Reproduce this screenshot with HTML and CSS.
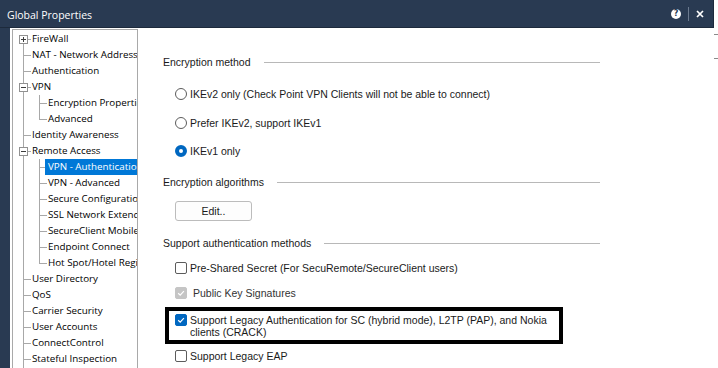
FILE: index.html
```html
<!DOCTYPE html>
<html>
<head>
<meta charset="utf-8">
<link rel="stylesheet" href="styles.css">
</head>
<body>
<div class="screen">
  <div class="window">
    <div class="titlebar">
      <span class="title">Global Properties</span>
      <div class="controls">
        <span class="help">?</span>
        <span class="sep"></span>
        <svg class="close" viewBox="0 0 8 8" width="8" height="8"><path d="M1 1 L7 7 M7 1 L1 7" stroke="#fff" stroke-width="1.7" fill="none"/></svg>
      </div>
    </div>
    <div class="body">
      <div class="tree">
        <div class="row"><span class="cell first"><span class="exp plus"></span></span><span class="label">FireWall</span></div>
        <div class="row"><span class="cell tee"></span><span class="label">NAT - Network Address Translation</span></div>
        <div class="row"><span class="cell tee"></span><span class="label">Authentication</span></div>
        <div class="row"><span class="cell vline"><span class="exp"></span></span><span class="label">VPN</span></div>
        <div class="row"><span class="cell vline"></span><span class="cell tee"></span><span class="label">Encryption Properties</span></div>
        <div class="row"><span class="cell vline"></span><span class="cell elbow"></span><span class="label">Advanced</span></div>
        <div class="row"><span class="cell tee"></span><span class="label">Identity Awareness</span></div>
        <div class="row"><span class="cell vline"><span class="exp"></span></span><span class="label">Remote Access</span></div>
        <div class="row"><span class="cell vline"></span><span class="cell tee"></span><span class="label selected">VPN - Authentication and Encryption</span></div>
        <div class="row"><span class="cell vline"></span><span class="cell tee"></span><span class="label">VPN - Advanced</span></div>
        <div class="row"><span class="cell vline"></span><span class="cell tee"></span><span class="label">Secure Configuration Verification</span></div>
        <div class="row"><span class="cell vline"></span><span class="cell tee"></span><span class="label">SSL Network Extender</span></div>
        <div class="row"><span class="cell vline"></span><span class="cell tee"></span><span class="label">SecureClient Mobile</span></div>
        <div class="row"><span class="cell vline"></span><span class="cell tee"></span><span class="label">Endpoint Connect</span></div>
        <div class="row"><span class="cell vline"></span><span class="cell elbow"></span><span class="label">Hot Spot/Hotel Registration</span></div>
        <div class="row"><span class="cell tee"></span><span class="label">User Directory</span></div>
        <div class="row"><span class="cell tee"></span><span class="label">QoS</span></div>
        <div class="row"><span class="cell tee"></span><span class="label">Carrier Security</span></div>
        <div class="row"><span class="cell tee"></span><span class="label">User Accounts</span></div>
        <div class="row"><span class="cell tee"></span><span class="label">ConnectControl</span></div>
        <div class="row"><span class="cell tee"></span><span class="label">Stateful Inspection</span></div>
        <div class="row"><span class="cell tee"></span><span class="label">Log and Alert</span></div>
      </div>
      <div class="main">
        <div class="head h1">Encryption method</div>
        <div class="radios">
          <div class="opt"><span class="radio"></span><span>IKEv2 only (Check Point VPN Clients will not be able to connect)</span></div>
          <div class="opt"><span class="radio"></span><span>Prefer IKEv2, support IKEv1</span></div>
          <div class="opt"><span class="radio on"></span><span>IKEv1 only</span></div>
        </div>
        <div class="head h2">Encryption algorithms</div>
        <div class="btn">Edit..</div>
        <div class="head h3">Support authentication methods</div>
        <div class="checks">
          <div class="opt"><span class="check"></span><span>Pre-Shared Secret (For SecuRemote/SecureClient users)</span></div>
          <div class="opt"><span class="check disabled"><svg viewBox="0 0 12 12" width="12" height="12"><path d="M3.2 6.2 L5.2 8.1 L8.9 4.2" fill="none" stroke="#fff" stroke-width="1.2"/></svg></span><span class="dim">Public Key Signatures</span></div>
          <div class="highlight">
            <div class="opt multi"><span class="check on"><svg viewBox="0 0 12 12" width="12" height="12"><path d="M3.2 6.2 L5.2 8.1 L8.9 4.2" fill="none" stroke="#fff" stroke-width="1.2"/></svg></span><span>Support Legacy Authentication for SC (hybrid mode), L2TP (PAP), and Nokia<br>clients (CRACK)</span></div>
          </div>
          <div class="opt eap"><span class="check"></span><span>Support Legacy EAP</span></div>
        </div>
      </div>
    </div>
  </div>
  <div class="edge"><i></i><i></i></div>
</div>
</body>
</html>
```
FILE: styles.css
```css
html, body {
  margin: 0;
  padding: 0;
  background: #fff;
}
.screen {
  display: flex;
  width: 718px;
  height: 368px;
  overflow: hidden;
}
.window {
  width: 714px;
  display: flex;
  flex-direction: column;
  background: #fff;
}
.titlebar {
  height: 28px;
  flex: none;
  background: #293a52;
  display: flex;
  align-items: center;
  padding-left: 7px;
  box-sizing: border-box;
  box-shadow: inset -1px -1px 0 #1d2a3c;
}
.title {
  color: #fff;
  font-family: "Open Sans", "Noto Sans", sans-serif;
  font-size: 10.5px;
  margin-top: 1px;
}
.controls {
  margin-left: auto;
  display: flex;
  align-items: center;
  padding-right: 10px;
}
.help {
  width: 10px;
  height: 10px;
  border-radius: 50%;
  background: #fff;
  color: #293a52;
  font-family: "DejaVu Sans", sans-serif;
  font-weight: bold;
  font-size: 8px;
  line-height: 10px;
  text-align: center;
}
.sep {
  width: 1px;
  height: 14px;
  background: #6b7a8f;
  margin: 0 7px 0 7px;
}
.close {
  display: block;
}
.body {
  flex: 1;
  display: flex;
  border-left: 10px solid #293a52;
  min-height: 0;
}
.tree {
  margin: 1px 0 0 2px;
  width: 126px;
  flex: none;
  border: 1px solid #a9a9a9;
  border-bottom: none;
  padding-top: 1px;
  padding-left: 2px;
  box-sizing: border-box;
  overflow: hidden;
  font-family: "Open Sans", "Noto Sans", sans-serif;
  font-size: 9.8px;
  color: #000;
}
.row {
  display: flex;
  height: 16px;
  align-items: stretch;
}
.cell {
  width: 16px;
  flex: none;
  display: flex;
  align-items: center;
  background-repeat: no-repeat;
}
.cell.vline {
  background-image: linear-gradient(#a8a8a8, #a8a8a8);
  background-position: 8px 0;
  background-size: 1px 100%;
}
.cell.tee {
  background-image: linear-gradient(#a8a8a8, #a8a8a8), linear-gradient(#a8a8a8, #a8a8a8);
  background-position: 8px 0, 8px 8px;
  background-size: 1px 100%, 8px 1px;
}
.cell.elbow {
  background-image: linear-gradient(#a8a8a8, #a8a8a8), linear-gradient(#a8a8a8, #a8a8a8);
  background-position: 8px 0, 8px 8px;
  background-size: 1px 9px, 8px 1px;
}
.cell.first {
  background-image: linear-gradient(#a8a8a8, #a8a8a8), linear-gradient(#a8a8a8, #a8a8a8);
  background-position: 8px 8px, 8px 8px;
  background-size: 1px 8px, 8px 1px;
}
.cell.vline:has(.exp) {
  background-image: linear-gradient(#a8a8a8, #a8a8a8), linear-gradient(#a8a8a8, #a8a8a8);
  background-position: 8px 0, 8px 8px;
  background-size: 1px 100%, 8px 1px;
}
.exp {
  width: 9px;
  height: 9px;
  margin-left: 4px;
  box-sizing: border-box;
  border: 1px solid #919191;
  background-color: #fff;
  background-image: linear-gradient(#3c3c3c, #3c3c3c);
  background-repeat: no-repeat;
  background-position: 1px 3px;
  background-size: 5px 1px;
}
.exp.plus {
  background-image: linear-gradient(#3c3c3c, #3c3c3c), linear-gradient(#3c3c3c, #3c3c3c);
  background-position: 1px 3px, 3px 1px;
  background-size: 5px 1px, 1px 5px;
}
.label {
  flex: 1;
  white-space: nowrap;
  line-height: 16px;
  padding-left: 1px;
}
.label.selected {
  background: #0078d7;
  color: #fff;
  margin-left: -2px;
  padding-left: 3px;
}
.main {
  flex: 1;
  padding-left: 25px;
  font-family: "Liberation Sans", Arial, sans-serif;
  font-size: 10.5px;
  color: #1a1a1a;
}
.head {
  width: 437px;
  height: 14px;
  line-height: 14px;
  display: flex;
  align-items: center;
  gap: 13px;
  white-space: nowrap;
}
.head::after {
  content: "";
  flex: 1;
  height: 1px;
  background: #b8b8b8;
}
.h1 { margin-top: 27px; }
.h2 { margin-top: 17px; }
.h3 { margin-top: 15px; }
.radios {
  margin-top: 18px;
  margin-left: 12px;
  display: flex;
  flex-direction: column;
  gap: 14.5px;
}
.opt {
  display: flex;
  align-items: center;
  gap: 3px;
  height: 14px;
  white-space: nowrap;
}
.radio {
  width: 12px;
  height: 12px;
  box-sizing: border-box;
  border-radius: 50%;
  border: 1px solid #5c5c5c;
  background: #fff;
  flex: none;
}
.radio.on {
  border: 4px solid #0067c0;
}
.btn {
  margin-top: 12px;
  margin-left: 12px;
  width: 77px;
  height: 20px;
  box-sizing: border-box;
  border: 1px solid #bcbcbc;
  border-radius: 3px;
  background: #fdfdfd;
  text-align: center;
  line-height: 18px;
}
.checks {
  margin-top: 11px;
  display: flex;
  flex-direction: column;
}
.checks > .opt {
  margin-left: 12px;
}
.checks > .opt + .opt {
  margin-top: 11px;
}
.check {
  width: 12px;
  height: 12px;
  box-sizing: border-box;
  border-radius: 2px;
  border: 1px solid #5c5c5c;
  background: #fff;
  flex: none;
  display: flex;
}
.check svg {
  margin: -1px;
}
.check.disabled {
  background: #c5c5c5;
  border-color: #c5c5c5;
}
.check.on {
  background: #0067c0;
  border-color: #0067c0;
}
.dim {
  color: #333;
  margin-left: 3px;
}
.highlight {
  margin-top: 7px;
  margin-left: 2px;
  width: 398px;
  box-sizing: border-box;
  border: 4px solid #000;
  padding: 3px 0 2px 6px;
}
.opt.multi {
  height: auto;
  align-items: flex-start;
  white-space: normal;
  line-height: 12px;
}
.checks > .opt.eap {
  margin-top: 5px;
}
.edge {
  flex: 1;
  display: flex;
  flex-direction: column;
  padding-top: 34px;
  gap: 23px;
}
.edge i {
  display: block;
  height: 1px;
  background: #8a8a8a;
}
```
